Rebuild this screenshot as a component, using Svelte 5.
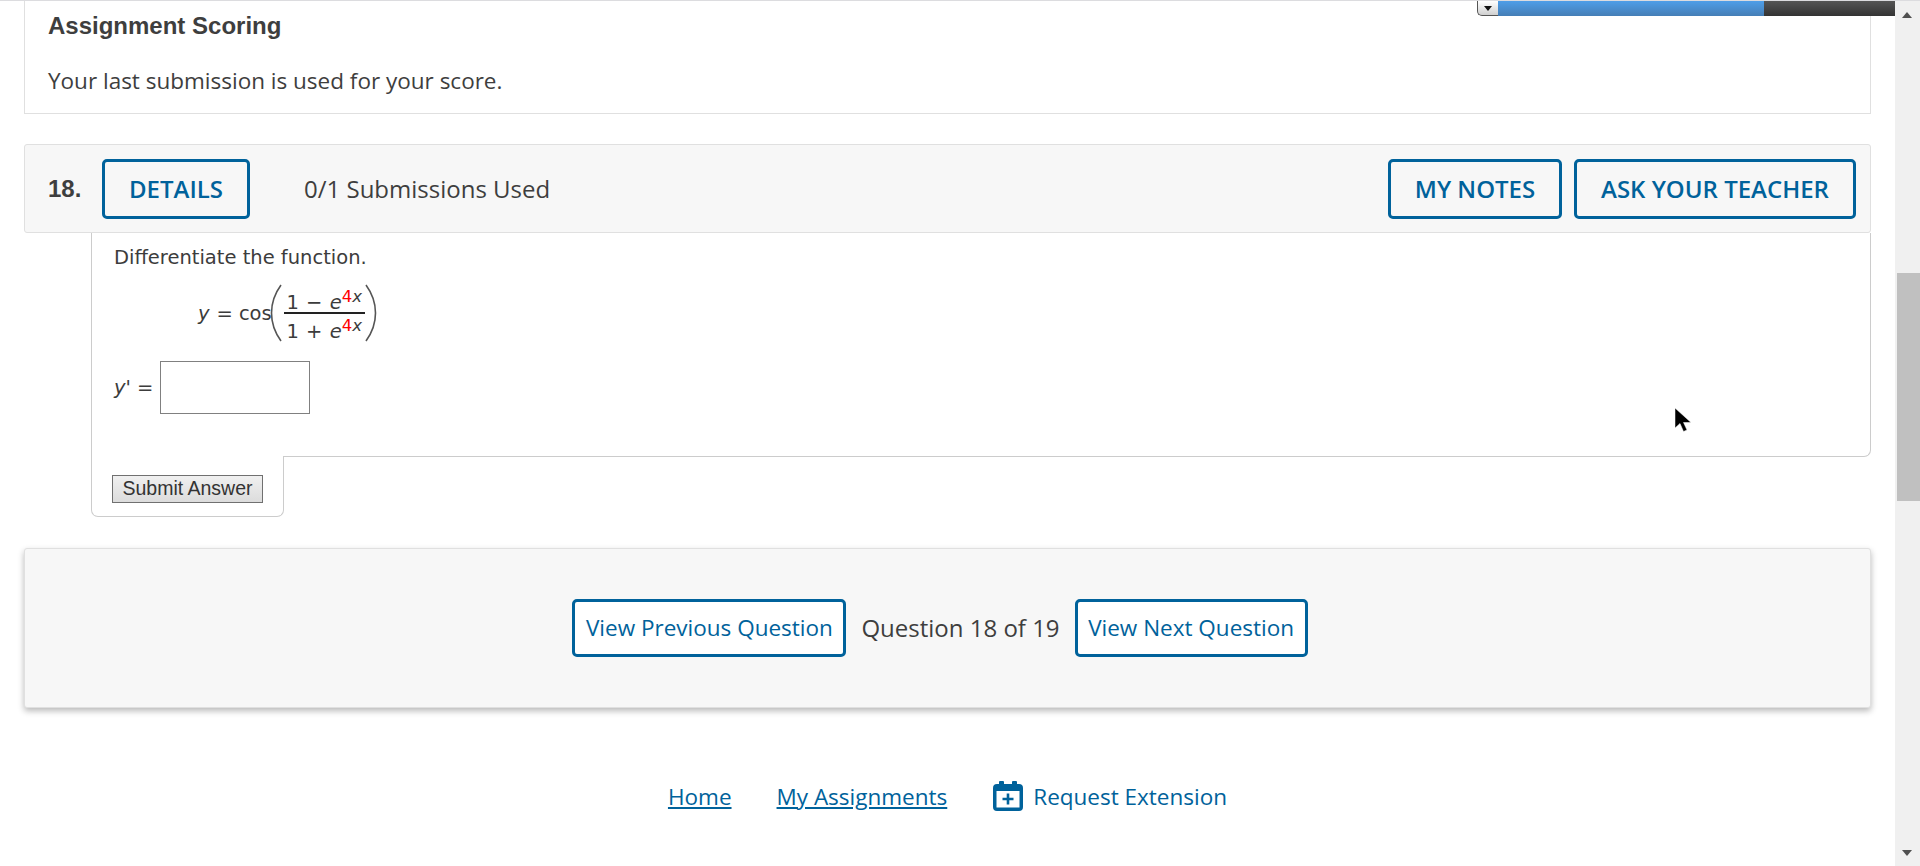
<script>
  const navLinks = ['Home', 'My Assignments'];
</script>

<div class="page">
  <main class="main">
    <section class="score">
      <h2>Assignment Scoring</h2>
      <p>Your last submission is used for your score.</p>
    </section>

    <header class="qhead">
      <strong class="num">18.</strong>
      <button class="btn upper details">DETAILS</button>
      <span class="subs">0/1 Submissions Used</span>
      <span class="spacer"></span>
      <button class="btn upper notes">MY NOTES</button>
      <button class="btn upper ask">ASK YOUR TEACHER</button>
    </header>

    <section class="qbody">
      <p class="prompt">Differentiate the function.</p>
      <div class="eq">
        <i>y</i><span class="eqs">=</span><span>cos</span>
        <svg class="paren" viewBox="0 0 12 58" width="12" height="58"><path d="M11 1C3 12 1.500 20 1.500 29S3 46 11 57" fill="none" stroke="#555" stroke-width="1.600"/></svg>
        <span class="frac">
          <span class="top">1 <span class="op">−</span> <i>e</i><sup><b>4</b><i>x</i></sup></span>
          <span class="bot">1 <span class="op">+</span> <i>e</i><sup><b>4</b><i>x</i></sup></span>
        </span>
        <svg class="paren" viewBox="0 0 12 58" width="12" height="58"><path d="M1 1C9 12 10.500 20 10.500 29S9 46 1 57" fill="none" stroke="#555" stroke-width="1.600"/></svg>
      </div>
      <div class="answer">
        <span class="lbl"><i>y</i>' =</span>
        <input type="text" aria-label="answer" />
      </div>
    </section>
    <div class="tab"><button class="submit">Submit Answer</button></div>

    <nav class="pager">
      <button class="btn prev">View Previous Question</button>
      <span class="count">Question 18 of 19</span>
      <button class="btn next">View Next Question</button>
    </nav>

    <footer class="foot">
      {#each navLinks as l}
        <a href="#top">{l}</a>
      {/each}
      <span class="ext">
        <svg viewBox="0 0 30 30" width="30" height="30"><path d="M7 0h3a1 1 0 0 1 1 1v2h8V1a1 1 0 0 1 1-1h3a1 1 0 0 1 1 1v2h2a4 4 0 0 1 4 4v19a4 4 0 0 1-4 4H4a4 4 0 0 1-4-4V7a4 4 0 0 1 4-4h2V1a1 1 0 0 1 1-1z M3.500 10v16.500h23V10z" fill="#00629b" fill-rule="evenodd"/><path d="M13.700 12.500h2.600v4.200h4.200v2.600h-4.200v4.200h-2.600v-4.200H9.500v-2.600h4.200z" fill="#00629b"/></svg>
        <span>Request Extension</span>
      </span>
    </footer>
  </main>

  <aside class="scroll">
    <span class="arrow up"></span>
    <span class="thumb"></span>
    <span class="arrow down"></span>
  </aside>

  <div class="strip">
    <span class="drop"><span></span></span>
    <span class="blue"></span>
    <span class="dark"></span>
  </div>

  <svg class="cursor" viewBox="0 0 18 25" width="18" height="25"><path d="M1 0v20l5-4.500 3.500 8 3.500-1.500-3.500-7.500H17z" fill="#000" stroke="#fff" stroke-width=".5"/></svg>
</div>

<style>
  :global(body) { margin: 0; background: #fff; overflow: hidden; }
  .page { display: flex; width: 1920px; height: 866px; overflow: hidden; position: relative; color: #3e3e3e; font-family: "Open Sans", sans-serif; font-size: 24px; border-top: 1px solid #dcdcdf; box-sizing: border-box; }
  .main { width: 1895px; flex: none; padding: 0 24px; box-sizing: border-box; }
  .score { height: 113px; box-sizing: border-box; border: 1px solid #e0e0e0; border-top: 0; padding: 0 23px; }
  .score h2 { margin: 0; padding-top: 11px; font: bold 24px/28px "Liberation Sans", sans-serif; }
  .score p { margin: 24px 0 0; line-height: 33px; font-size: 22.500px; }
  .qhead { margin-top: 30px; height: 89px; box-sizing: border-box; background: #f7f7f7; border: 1px solid #e0e0e0; border-radius: 3px; display: flex; align-items: center; padding: 0 14px 0 23px; }
  .num { font: bold 24px "Liberation Sans", sans-serif; width: 54px; }
  .btn { font-family: "Open Sans", sans-serif; font-size: 22.500px; color: #00629b; background: #fff; border: 3px solid #00629b; border-radius: 5px; padding: 0; box-sizing: border-box; display: flex; align-items: center; justify-content: center; }
  .upper { height: 60px; background: #f7f7f7; font-weight: 600; font-size: 24px; }
  .details { width: 148px; }
  .subs { margin-left: 54px; }
  .spacer { flex: 1; }
  .notes { width: 174px; margin-right: 12px; }
  .ask { width: 282px; }
  .qbody { margin-left: 67px; height: 224px; box-sizing: border-box; border: 1px solid #ccc; border-top: 0; border-radius: 0 0 7px 0; padding: 0 0 0 22px; font-family: "DejaVu Sans", sans-serif; font-size: 19.500px; color: #3c3c3c; position: relative; }
  .prompt { margin: 0; padding-top: 14px; line-height: 22px; }
  .eq { display: flex; align-items: center; height: 58px; margin: 15px 0 0 84px; }
  .eqs { margin: 0 6px 0 7px; }
  .paren { flex: none; margin-left: -2px; }
  .frac { display: flex; flex: none; flex-direction: column; width: 81px; margin: 0 2px; text-align: center; white-space: nowrap; }
  .top { box-sizing: border-box; border-bottom: 2px solid #222; padding-top: 8px; line-height: 23px; height: 31px; }
  .bot { line-height: 36px; height: 29px; }
  .op { margin: 0 1px; }
  .frac sup { font-size: 16.500px; line-height: 0; vertical-align: 7px; }
  .frac b { font-weight: normal; color: #f00; }
  .answer { display: flex; align-items: center; gap: 7px; margin-top: 19px; }
  .lbl { white-space: nowrap; }
  input { width: 150px; height: 53px; box-sizing: border-box; border: 1.500px solid #808080; background: #fff; border-radius: 0; padding: 0; margin: 0; }
  .tab { margin: -1px 0 0 67px; width: 193px; height: 61px; box-sizing: border-box; border: 1px solid #ccc; border-top: 0; border-radius: 0 0 7px 7px; background: #fff; position: relative; padding: 19px 0 0 20px; }
  .submit { width: 151px; height: 28px; box-sizing: border-box; padding: 0 0 2px; font: 19.500px "Liberation Sans", sans-serif; color: #333; border: 1.500px solid #707070; background: linear-gradient(#f0f0f0, #dcdcdc); display: block; border-radius: 0; }
  .pager { margin-top: 31px; height: 160px; box-sizing: border-box; background: #f7f7f7; border: 1px solid #e0e0e0; border-radius: 3px; box-shadow: 0 3px 6px rgba(0,0,0,.28); display: flex; align-items: center; justify-content: center; padding-right: 15px; }
  .pager .btn { height: 58px; padding-bottom: 2px; }
  .prev { width: 274px; }
  .next { width: 233px; }
  .count { margin: 0 15px; padding-bottom: 2px; }
  .foot { margin-top: 55px; display: flex; align-items: center; justify-content: center; height: 66px; color: #00629b; font-size: 22.500px; }
  .foot a { color: #00629b; margin-right: 45px; }
  .ext { display: flex; align-items: center; gap: 10px; }
  .ext svg { margin-left: 1px; }
  .scroll { width: 25px; flex: none; background: #f0f0f0; display: flex; flex-direction: column; align-items: center; position: relative; }
  .thumb { position: absolute; top: 272px; left: 2px; right: 0; height: 228px; background: #c0c0c0; }
  .arrow { position: absolute; left: 7px; width: 0; height: 0; border-left: 5.500px solid transparent; border-right: 5.500px solid transparent; }
  .up { top: 11px; border-bottom: 6px solid #505050; }
  .down { bottom: 10px; border-top: 6px solid #505050; }
  .strip { position: absolute; top: 0; left: 1477px; display: flex; width: 418px; height: 15px; }
  .drop { width: 21px; background: linear-gradient(#fff, #d0d0d0); border: 1px solid #555; border-top: 0; border-right: 0; border-radius: 0 0 0 5px; box-sizing: border-box; display: flex; justify-content: center; padding-top: 5px; }
  .drop span { width: 0; height: 0; border-left: 4px solid transparent; border-right: 4px solid transparent; border-top: 5px solid #111; }
  .blue { width: 266px; background: linear-gradient(#4e9ee8, #457eb6); }
  .dark { flex: 1; background: linear-gradient(#555, #333); }
  .cursor { position: absolute; left: 1674px; top: 407px; }
</style>
